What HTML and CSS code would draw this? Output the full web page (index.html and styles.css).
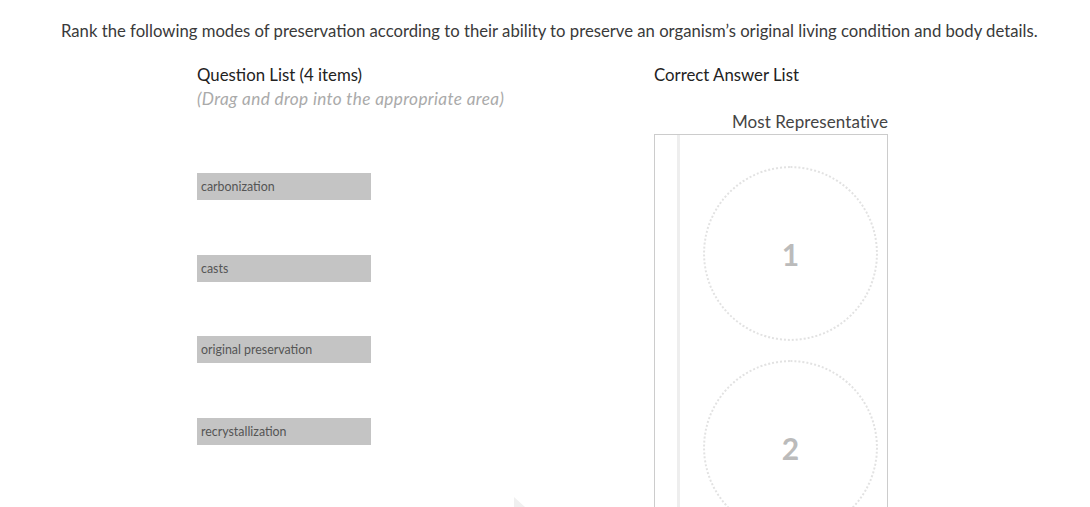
FILE: index.html
```html
<!DOCTYPE html>
<html lang="en">
<head>
    <meta charset="UTF-8">
    <title>Ranking Question</title>
    <link rel="stylesheet" href="styles.css">
</head>
<body>

    <p class="prompt">Rank the following modes of preservation according to their ability to preserve an organism’s original living condition and body details.</p>

    <div class="columns">
        <div class="questionList">
            <div class="listTitle">Question List (4 items)</div>
            <div class="hint">(Drag and drop into the appropriate area)</div>

            <div class="items">
                <div class="item">carbonization</div>
                <div class="item">casts</div>
                <div class="item">original preservation</div>
                <div class="item">recrystallization</div>
            </div>
        </div>

        <div class="answerList">
            <div class="listTitle">Correct Answer List</div>
            <div class="rankLabel">Most Representative</div>

            <div class="dropBox">
                <div class="rail"></div>
                <div class="slots">
                    <div class="slot">1</div>
                    <div class="slot">2</div>
                </div>
            </div>
        </div>
    </div>

    <div class="cornerMark"></div>

</body>
</html>
```

FILE: styles.css
```css
body {
    margin:             0;
    font-family:        Lato, "Open Sans", sans-serif;
    color:              #333;
    background-color:   #fff;
    height:             507px;
    overflow:           hidden;
    position:           relative;
}

.prompt {
    margin:             20px 0 0 0;
    padding-left:       61px;
    font-size:          16.7px;
    line-height:        22px;
    color:              #3a3a3a;
    white-space:        nowrap;
}

.columns {
    display:            grid;
    grid-template-columns: 457px 234px;
    padding-left:       197px;
    margin-top:         22px;
}

.listTitle {
    font-size:          16.8px;
    line-height:        22px;
    color:              #222;
    white-space:        nowrap;
}

.hint {
    margin-top:         2px;
    font-size:          17.2px;
    line-height:        22px;
    font-style:         italic;
    letter-spacing:     0.35px;
    color:              #aaa;
    white-space:        nowrap;
}

.items {
    display:            flex;
    flex-direction:     column;
    gap:                54.5px;
    margin-top:         63px;
}

.item {
    width:              170px;
    height:             27px;
    line-height:        28px;
    padding-left:       4px;
    background-color:   #c4c4c4;
    font-size:          12.4px;
    color:              #555;
    white-space:        nowrap;
}

.rankLabel {
    margin-top:         25px;
    text-align:         right;
    font-size:          17px;
    line-height:        22px;
    letter-spacing:     0.1px;
    color:              #444;
    white-space:        nowrap;
}

.dropBox {
    display:            flex;
    margin-top:         1px;
    height:             420px;
    border:             1px solid #ccc;
}

.rail {
    width:              3px;
    margin-left:        22px;
    background-color:   #eee;
}

.slots {
    display:            flex;
    flex-direction:     column;
    gap:                19px;
    margin:             31px 0 0 23px;
}

.slot {
    width:              171px;
    height:             171px;
    border:             2px dotted #e2e2e2;
    border-radius:      50%;
    display:            flex;
    align-items:        center;
    justify-content:    center;
    font-size:          30px;
    font-weight:        bold;
    color:              #bbb;
}

.cornerMark {
    position:           absolute;
    left:               514px;
    top:                497px;
    width:              0;
    height:             0;
    border-left:        11px solid #f0f0f0;
    border-top:         10px solid transparent;
}
```
